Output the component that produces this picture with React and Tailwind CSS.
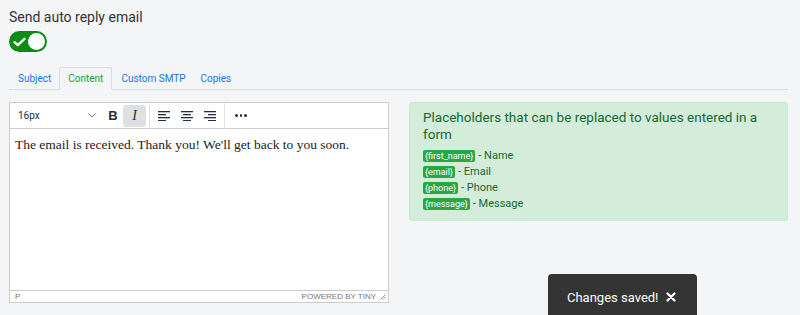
import React from "react";

const AlignIcon = ({ type }) => {
  const lines = type === "left"
    ? [[0, 12], [0, 8], [0, 12], [0, 8]]
    : type === "center"
    ? [[0, 12], [2, 10], [0, 12], [2, 10]]
    : [[0, 12], [4, 12], [0, 12], [4, 12]];
  return (
    <svg width="12" height="10" viewBox="0 0 12 10">
      {lines.map(([a, b], i) => (
        <rect key={i} x={a} y={i * 3} width={b - a} height="1.3" fill="#222f3e" />
      ))}
    </svg>
  );
};

export default function App() {
  return (
    <div className="relative w-[800px] h-[315px] overflow-hidden bg-[#f4f5f7]" style={{ fontFamily: "Roboto, 'Liberation Sans', sans-serif" }}>
      <div className="pl-[9px] pr-[12px] pt-[8px]">
        <div className="text-[14px] leading-[18px] text-[#333]">Send auto reply email</div>
        <div className="mt-[5px] w-[38px] h-[21px] rounded-full bg-[#0e8a16] flex items-center justify-between px-[2px]">
          <svg width="13" height="10" viewBox="0 0 13 10" className="ml-[2px]">
            <path d="M1.5 5.2 L4.8 8.2 L11.5 1.8" stroke="white" strokeWidth="2.4" fill="none" strokeLinecap="round" strokeLinejoin="round" />
          </svg>
          <div className="w-[17px] h-[17px] rounded-full bg-white" />
        </div>
        <div className="mt-[15px] flex items-end border-b border-[#dcdde0] h-[23px] text-[10px] text-[#1a73e8]">
          <div className="pl-[9px] pr-[8px] h-[22px] flex items-center">Subject</div>
          <div className="px-[8px] h-[23px] -mb-px flex items-center text-[#1e9a3a] bg-[#f4f5f7] border border-[#dcdde0] border-b-[#f4f5f7] rounded-t-[3px]">Content</div>
          <div className="px-[9px] h-[22px] flex items-center">Custom SMTP</div>
          <div className="px-[6px] h-[22px] flex items-center">Copies</div>
        </div>
        <div className="mt-[12px] flex gap-[20px]">
          <div className="w-[380px] h-[201px] border border-[#cccccc] bg-white flex flex-col">
            <div className="h-[26px] border-b border-[#cccccc] flex items-center text-[#222f3e]">
              <div className="w-[92px] flex items-center justify-between pl-[8px] pr-[6px] text-[10px]">
                <span>16px</span>
                <svg width="8" height="5" viewBox="0 0 8 5"><path d="M0.5 0.5 L4 4 L7.5 0.5" stroke="#777" fill="none" strokeWidth="1" /></svg>
              </div>
              <div className="w-[14px] text-center text-[13px] font-bold ml-[4px]" style={{ fontFamily: "'Liberation Sans', Arial, sans-serif" }}>B</div>
              <div className="ml-[3px] w-[23px] h-[22px] rounded-[3px] bg-[#dee0e2] flex items-center justify-center text-[14px] italic" style={{ fontFamily: "'Liberation Serif', serif" }}>I</div>
              <div className="ml-[3px] w-px h-[26px] bg-[#e3e3e3]" />
              <div className="ml-[2px] w-[23px] flex justify-center"><AlignIcon type="left" /></div>
              <div className="w-[23px] flex justify-center"><AlignIcon type="center" /></div>
              <div className="w-[23px] flex justify-center"><AlignIcon type="right" /></div>
              <div className="ml-[3px] w-px h-[26px] bg-[#e3e3e3]" />
              <div className="ml-[10px] flex gap-[2px]">
                <span className="w-[2.5px] h-[2.5px] rounded-full bg-[#222f3e]" />
                <span className="w-[2.5px] h-[2.5px] rounded-full bg-[#222f3e]" />
                <span className="w-[2.5px] h-[2.5px] rounded-full bg-[#222f3e]" />
              </div>
            </div>
            <div className="flex-1 px-[5px] pt-[6px] text-[13.5px] text-[#222]" style={{ fontFamily: "'Liberation Serif', 'Times New Roman', serif" }}>
              The email is received. Thank you! We'll get back to you soon.
            </div>
            <div className="h-[12px] border-t border-[#cccccc] flex items-center justify-between pl-[5px] pr-[2px] text-[8px] text-[#777]" style={{ fontFamily: "'Liberation Sans', sans-serif" }}>
              <span>P</span>
              <div className="flex items-center gap-[4px]">
                <span>POWERED BY TINY</span>
                <svg width="6" height="6" viewBox="0 0 6 6"><path d="M0.5 5.5 L5.5 0.5 M3 5.5 L5.5 3" stroke="#777" strokeWidth="0.8" /></svg>
              </div>
            </div>
          </div>
          <div className="w-[379px] h-[119px] self-start rounded-[3px] bg-[#d4eddb] border border-[#c9e8d1] pl-[13px] pr-[10px] pt-[6px]">
            <div className="text-[13.5px] leading-[17px] text-[#1a6630]">Placeholders that can be replaced to values entered in a form</div>
            <div className="mt-[5px] flex flex-col text-[11px] text-[#1a6630] leading-[16px]">
              {[["{first_name}", "Name"], ["{email}", "Email"], ["{phone}", "Phone"], ["{message}", "Message"]].map(([k, v]) => (
                <div key={k} className="flex items-center">
                  <span className="bg-[#28a745] text-white text-[9px] leading-[12px] px-[2px] rounded-[2px]">{k}</span>
                  <span className="ml-[3px]">- {v}</span>
                </div>
              ))}
            </div>
          </div>
        </div>
      </div>
      <div className="absolute left-[548px] top-[274px] w-[149px] h-[50px] bg-[#343434] rounded-t-[4px] flex items-start pt-[14px] pl-[19px] text-white text-[13px]">
        <span>Changes saved!</span>
        <svg width="10" height="10" viewBox="0 0 10 10" className="ml-[8px] mt-[4px]"><path d="M1.5 1.5 L8.5 8.5 M8.5 1.5 L1.5 8.5" stroke="white" strokeWidth="2.2" strokeLinecap="round" /></svg>
      </div>
    </div>
  );
}
